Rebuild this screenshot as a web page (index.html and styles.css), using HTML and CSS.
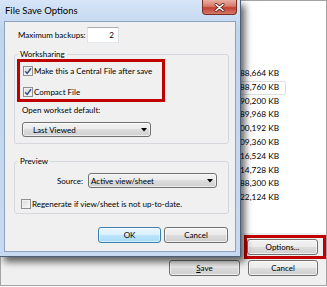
FILE: index.html
```
<!DOCTYPE html>
<html>
<head>
<meta charset="utf-8">
<link rel="stylesheet" href="styles.css">
</head>
<body>
<div class="screen">
  <div class="parent">
    <div class="list">
      <div class="sizes">
        <div class="size">88,664 KB</div>
        <div class="size selected">88,760 KB</div>
        <div class="size">90,200 KB</div>
        <div class="size">89,968 KB</div>
        <div class="size">100,192 KB</div>
        <div class="size">109,360 KB</div>
        <div class="size">116,524 KB</div>
        <div class="size">114,728 KB</div>
        <div class="size">88,300 KB</div>
        <div class="size">122,124 KB</div>
      </div>
    </div>
    <div class="parent-buttons">
      <button class="btn btn-options">Options...</button>
      <div class="save-row">
        <button class="btn btn-save"><u>S</u>ave</button>
        <button class="btn btn-cancel-parent">Cancel</button>
      </div>
    </div>
    <div class="annot-options"></div>
  </div>

  <div class="dialog">
    <div class="titlebar">
      <span class="title">File Save Options</span>
      <span class="close">
        <svg width="11" height="9" viewBox="0 0 11 9">
          <path d="M2 1.5 L9 7.5 M9 1.5 L2 7.5" stroke="#5a2a24" stroke-width="3" stroke-linecap="round"/>
          <path d="M2 1.5 L9 7.5 M9 1.5 L2 7.5" stroke="#ffffff" stroke-width="1.6" stroke-linecap="round"/>
        </svg>
      </span>
    </div>
    <div class="client">
      <div class="backups-row">
        <span class="backups-label">Maximum backups:</span>
        <span class="spin">2</span>
      </div>

      <fieldset class="group worksharing">
        <legend>Worksharing</legend>
        <div class="highlight">
          <div class="check-row">
            <span class="checkbox"><svg width="8" height="8" viewBox="0 0 8 8"><path d="M1.2 4.2 L3.2 6.4 L7 1.2" fill="none" stroke="#2f4f8f" stroke-width="1.5"/></svg></span>
            <span>Make this a Central File after save</span>
          </div>
          <div class="check-row">
            <span class="checkbox"><svg width="8" height="8" viewBox="0 0 8 8"><path d="M1.2 4.2 L3.2 6.4 L7 1.2" fill="none" stroke="#2f4f8f" stroke-width="1.5"/></svg></span>
            <span>Compact File</span>
          </div>
        </div>
        <div class="field-label">Open workset default:</div>
        <div class="combo combo-workset">
          <span>Last Viewed</span>
          <svg class="arrow" width="6" height="4" viewBox="0 0 6 4"><path d="M0 0 H6 L3 3.5 Z" fill="#000"/></svg>
        </div>
      </fieldset>

      <fieldset class="group preview">
        <legend>Preview</legend>
        <div class="source-row">
          <span class="source-label">Source:</span>
          <div class="combo combo-source">
            <span>Active view/sheet</span>
            <svg class="arrow" width="6" height="4" viewBox="0 0 6 4"><path d="M0 0 H6 L3 3.5 Z" fill="#000"/></svg>
          </div>
        </div>
        <div class="check-row regen">
          <span class="checkbox"></span>
          <span>Regenerate if view/sheet is not up-to-date.</span>
        </div>
      </fieldset>

      <div class="dialog-buttons">
        <button class="btn btn-ok">OK</button>
        <button class="btn btn-cancel">Cancel</button>
      </div>
    </div>
  </div>
</div>
</body>
</html>
```

FILE: styles.css
```
body {
  margin: 0;
  background: #fff;
}

.screen {
  position: relative;
  width: 327px;
  height: 287px;
  overflow: hidden;
  background: #fff;
  font-family: Lato, "Liberation Sans", sans-serif;
  font-size: 8px;
  color: #000;
}

/* ---------- parent window ---------- */
.parent {
  display: flex;
  flex-direction: column;
  height: 286px;
  box-sizing: border-box;
  border: 1px solid #a3a3a3;
  background: #fff;
}

.list {
  flex: 0 0 232px;
  box-sizing: border-box;
  padding: 66px 40px 0 0;
  display: flex;
  justify-content: flex-end;
}

.sizes {
  width: 90px;
}

.size {
  height: 13.8px;
  line-height: 11.8px;
  box-sizing: border-box;
  border: 1px solid transparent;
  text-align: right;
  padding-right: 6px;
  font-size: 8.3px;
}

.size.selected {
  border-color: #dedede;
  border-radius: 2px;
}

.parent-buttons {
  flex: 1;
  background: #f0f0f0;
  display: flex;
  flex-direction: column;
  align-items: flex-end;
  gap: 5px;
  padding: 6px 8px 0 0;
}

.save-row {
  display: flex;
  gap: 8px;
}

.btn {
  font: inherit;
  color: #000;
  height: 16px;
  padding: 0;
  box-sizing: border-box;
  border: 1px solid #707070;
  border-radius: 3px;
  background: linear-gradient(#f2f2f2 0%, #ebebeb 49%, #dddddd 50%, #cfcfcf 100%);
  box-shadow: inset 0 0 0 1px rgba(255, 255, 255, 0.65);
}

.btn-options { width: 71px; }
.btn-save { width: 71px; }
.btn-cancel-parent { width: 70px; }

.annot-options {
  position: absolute;
  left: 244px;
  top: 235px;
  width: 82px;
  height: 24px;
  box-sizing: border-box;
  border: 3px solid #c00000;
}

/* ---------- dialog ---------- */
.dialog {
  position: absolute;
  left: 0;
  top: 0;
  width: 241px;
  height: 257px;
  box-sizing: border-box;
  padding: 0 4px 4px 4px;
  border-right: 1px solid #4f5f73;
  border-bottom: 1px solid #4f5f73;
  background: linear-gradient(#d6e5f7, #c0d5ef 30px, #c8daf1);
  box-shadow: 4px 5px 7px rgba(0, 0, 0, 0.6);
  display: flex;
  flex-direction: column;
}

.titlebar {
  flex: none;
  height: 21px;
  display: flex;
  align-items: flex-start;
  justify-content: space-between;
}

.title {
  font-size: 9.5px;
  line-height: 21px;
  margin-left: 1px;
}

.close {
  width: 35px;
  height: 15px;
  margin-right: -1px;
  box-sizing: border-box;
  border: 1px solid #7a2e26;
  border-top: none;
  border-radius: 0 0 4px 4px;
  background: linear-gradient(#eab0a4, #d77a68 45%, #c2402f 55%, #d8786a);
  display: flex;
  align-items: center;
  justify-content: center;
}

.client {
  flex: 1;
  border: 1px solid #8da2bd;
  background: #f0f0f0;
  display: flex;
  flex-direction: column;
}

.backups-row {
  display: flex;
  align-items: center;
  margin: 5px 0 0 13px;
}

.backups-label {
  flex: none;
  width: 69px;
  white-space: nowrap;
}

.spin {
  width: 32px;
  height: 16px;
  box-sizing: border-box;
  border: 1px solid #abadb3;
  border-color: #abadb3 #dbdfe6 #e3e9ef #e2e3ea;
  background: #fff;
  text-align: right;
  padding-right: 4px;
  line-height: 14px;
}

.group {
  margin: 0 6px 0 9px;
  padding: 0;
  min-width: 0;
  border: 1px solid #d5d9dd;
  border-radius: 3px;
}

.group legend {
  padding: 0 2px;
  margin-left: 3px;
  line-height: 12px;
}

.worksharing {
  margin-top: 5px;
  padding-bottom: 6px;
}

.highlight {
  margin: -1px 0 0 2px;
  width: 148px;
  box-sizing: border-box;
  border: 3px solid #c00000;
  padding: 2px 0 1px 3px;
  display: flex;
  flex-direction: column;
  gap: 8px;
}

.check-row {
  display: flex;
  align-items: center;
  gap: 1px;
  height: 13px;
  white-space: nowrap;
}

.checkbox {
  width: 10px;
  height: 10px;
  flex: none;
  box-sizing: border-box;
  border: 1px solid #8e8f8f;
  background: linear-gradient(135deg, #d8d8d8, #fbfbfb);
  box-shadow: inset 0 0 0 1px #f2f2f2;
  display: flex;
  align-items: center;
  justify-content: center;
}

.field-label {
  margin: 2px 0 0 7px;
  line-height: 12px;
}

.combo {
  display: flex;
  align-items: center;
  justify-content: space-between;
  height: 15px;
  box-sizing: border-box;
  border: 1px solid #707070;
  border-radius: 3px;
  background: linear-gradient(#f2f2f2 0%, #ebebeb 49%, #dddddd 50%, #cfcfcf 100%);
  box-shadow: inset 0 0 0 1px rgba(255, 255, 255, 0.6);
}

.combo-workset {
  width: 129px;
  margin: 6px 0 0 7px;
  padding: 0 3px 0 10px;
}

.combo-source {
  width: 129px;
  padding: 0 3px 0 2px;
}

.preview {
  margin-top: 11px;
  padding-bottom: 3px;
}

.source-row {
  display: grid;
  grid-template-columns: 68px 129px;
  column-gap: 5px;
  align-items: center;
  margin-top: 6px;
}

.source-label {
  text-align: right;
}

.regen {
  margin: 9px 0 0 6px;
}

.dialog-buttons {
  display: flex;
  justify-content: flex-end;
  gap: 3px;
  margin-top: 13px;
  padding-right: 7px;
}

.btn-ok {
  width: 63px;
  border-color: #3c7fb1;
  background: linear-gradient(#eaf6fd 0%, #d9f0fc 49%, #bee6fd 50%, #a7d9f5 100%);
  box-shadow: inset 0 0 0 1px rgba(255, 255, 255, 0.5);
}

.btn-cancel {
  width: 64px;
}
```
